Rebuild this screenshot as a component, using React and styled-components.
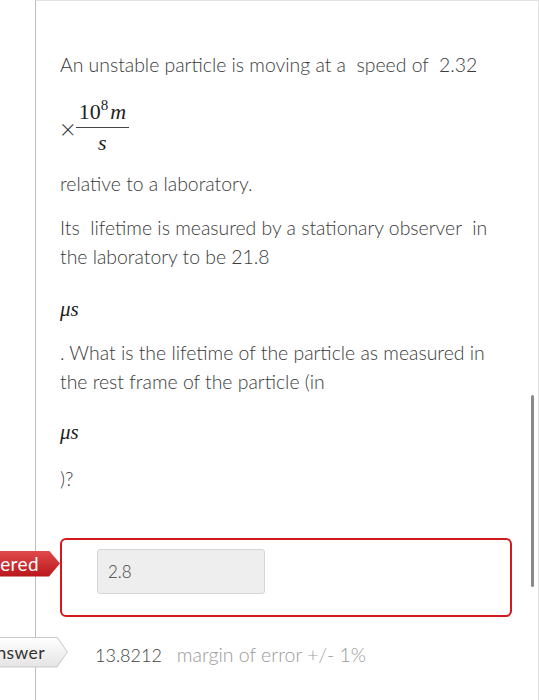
import styled, { createGlobalStyle } from "styled-components";

const GlobalStyle = createGlobalStyle`
  html, body {
    margin: 0;
    padding: 0;
    background: #fff;
  }
  body {
    font-family: Lato, "Open Sans", sans-serif;
    color: #444;
  }
`;

export default function App() {
  return (
    <>
      <GlobalStyle />
      <Page>
        <Gutter />
        <Panel>
          <Para>An unstable particle is moving at a&nbsp; speed of&nbsp; 2.32</Para>
          <MathBlock top={20}>
            <Times>×</Times>
            <Fraction>
              <Num>
                10<sup>8</sup>
                <i>m</i>
              </Num>
              <Den>
                <i>s</i>
              </Den>
            </Fraction>
          </MathBlock>
          <Para top={12}>relative to a laboratory.</Para>
          <Para top={16}>
            Its&nbsp; lifetime is measured by a stationary observer&nbsp; in the
            laboratory to be 21.8
          </Para>
          <MathLine top={24}>μs</MathLine>
          <Para top={16}>
            . What is the lifetime of the particle as measured in the rest
            frame of the particle (in
          </Para>
          <MathLine top={22}>μs</MathLine>
          <Para top={19}>)?</Para>

          <AnswerBox>
            <Tag tone="red">Answered</Tag>
            <Input>2.8</Input>
          </AnswerBox>

          <ResultRow>
            <Tag tone="gray">Correct Answer</Tag>
            <Value>13.8212</Value>
            <Margin>margin of error +/- 1%</Margin>
          </ResultRow>
        </Panel>
        <Scrollbar />
      </Page>
    </>
  );
}

const Page = styled.div`
  display: flex;
  min-height: 700px;
  position: relative;
  overflow: hidden;
`;

const Gutter = styled.div`
  width: 35px;
  flex-shrink: 0;
`;

const Panel = styled.div`
  flex: 1;
  border-left: 1px solid #bdbdbd;
  border-top: 1px solid #e2e2e2;
  border-right: 1px solid #e2e2e2;
  padding: 50px 26px 0 24px;
`;

const Para = styled.p`
  margin: ${(p) => p.top || 0}px 0 0;
  max-width: 440px;
  font-size: 19.4px;
  font-weight: 300;
  line-height: 28.5px;
  color: #3a3a3a;
`;

const MathBlock = styled.div`
  margin-top: ${(p) => p.top || 0}px;
  display: flex;
  align-items: center;
`;

const Times = styled.span`
  font-family: Lato, sans-serif;
  font-size: 27px;
  font-weight: 300;
  color: #333;
  line-height: 1;
`;

const Fraction = styled.span`
  display: inline-flex;
  flex-direction: column;
  align-items: center;
  font-family: "Liberation Serif", "Times New Roman", serif;
  font-size: 22px;
  color: #222;
`;

const Num = styled.span`
  padding: 0 3px 3px;
  border-bottom: 1px solid #444;
  line-height: 24px;

  sup {
    font-size: 15px;
    vertical-align: 9px;
    line-height: 0;
    margin-right: 2px;
  }
`;

const Den = styled.span`
  line-height: 30px;
`;

const MathLine = styled.div`
  margin-top: ${(p) => p.top || 0}px;
  font-family: "Liberation Serif", "Times New Roman", serif;
  font-style: italic;
  font-size: 21px;
  line-height: 28px;
  color: #222;
`;

const AnswerBox = styled.div`
  position: relative;
  margin-top: 44px;
  border: 2px solid #d1191e;
  border-radius: 6px;
  padding: 9px 35px 21px;
`;

const Input = styled.div`
  background: #eeeeee;
  border: 1px solid #d6d6d6;
  border-radius: 3px;
  display: flex;
  align-items: center;
  padding-left: 10px;
  box-sizing: border-box;
  width: 168px;
  height: 45px;
  font-size: 17px;
  font-weight: 300;
  color: #444;
`;

const Tag = styled.div`
  position: absolute;
  right: calc(100% + ${(p) => (p.tone === "red" ? 2 : -8)}px);
  top: ${(p) => (p.tone === "red" ? 11 : -6)}px;
  height: ${(p) => (p.tone === "red" ? 26 : 31)}px;
  padding: 0 ${(p) => (p.tone === "red" ? 21 : 23)}px 0 30px;
  display: flex;
  align-items: center;
  white-space: nowrap;
  font-size: ${(p) => (p.tone === "red" ? 19 : 17.5)}px;
  letter-spacing: 0.4px;
  color: ${(p) => (p.tone === "red" ? "#fff" : "#333")};
  background: ${(p) =>
    p.tone === "red" ? "linear-gradient(#e04a4a, #b9161b)" : "#c9c9c9"};
  clip-path: polygon(0 0, calc(100% - 11px) 0, 100% 50%, calc(100% - 11px) 100%, 0 100%);
  isolation: isolate;

  &::before {
    content: "";
    display: ${(p) => (p.tone === "red" ? "none" : "block")};
    position: absolute;
    inset: 1px;
    background: linear-gradient(#ffffff, #e4e4e4);
    clip-path: polygon(0 0, calc(100% - 10.5px) 0, 100% 50%, calc(100% - 10.5px) 100%, 0 100%);
    z-index: -1;
  }
`;

const ResultRow = styled.div`
  position: relative;
  margin-top: 26px;
  display: flex;
  align-items: baseline;
  padding-left: 35px;
  height: 31px;
`;

const Value = styled.span`
  font-size: 18px;
  font-weight: 300;
  color: #444;
  margin-right: 15px;
`;

const Margin = styled.span`
  font-size: 19.5px;
  font-weight: 300;
  color: #9a9a9a;
`;

const Scrollbar = styled.div`
  position: absolute;
  right: 5px;
  top: 395px;
  width: 3px;
  height: 192px;
  border-radius: 2px;
  background: #8a8a8a;
`;
